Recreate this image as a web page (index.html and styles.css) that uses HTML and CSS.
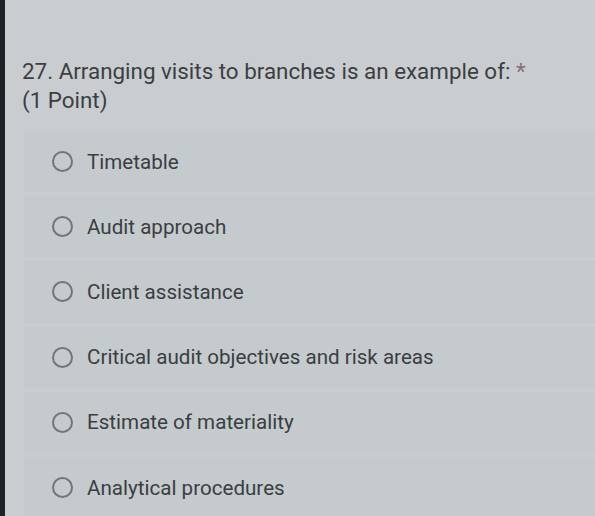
FILE: index.html
```html
<!DOCTYPE html>
<html lang="en">
<head>
<meta charset="utf-8">
<link rel="stylesheet" href="styles.css">
</head>
<body>
<div class="screen">
  <div class="question">
    <div class="title">27. Arranging visits to branches is an example of: <span class="req">*</span></div>
    <div class="points">(1 Point)</div>
  </div>
  <div class="options">
    <label class="option"><span class="radio"></span><span class="label">Timetable</span></label>
    <label class="option"><span class="radio"></span><span class="label">Audit approach</span></label>
    <label class="option"><span class="radio"></span><span class="label">Client assistance</span></label>
    <label class="option"><span class="radio"></span><span class="label">Critical audit objectives and risk areas</span></label>
    <label class="option"><span class="radio"></span><span class="label">Estimate of materiality</span></label>
    <label class="option"><span class="radio"></span><span class="label">Analytical procedures</span></label>
  </div>
</div>
</body>
</html>
```

FILE: styles.css
```css
html, body {
  margin: 0;
  padding: 0;
  height: 100%;
}
body {
  background: #c9cdd0;
  font-family: Roboto, "Liberation Sans", sans-serif;
  color: #3a3e42;
  overflow: hidden;
}
.screen {
  height: 516px;
  border-left: 5px solid #1c2228;
  display: flex;
  flex-direction: column;
}
.question {
  padding: 57px 0 0 17px;
  font-size: 22.4px;
  line-height: 29px;
  color: #3b3f43;
}
.req {
  color: #8a6e76;
}
.options {
  margin-top: 16px;
  margin-left: 19px;
  display: flex;
  flex-direction: column;
  gap: 4px;
}
.option {
  height: 61.2px;
  background: #c5cacd;
  display: flex;
  align-items: center;
  padding-left: 28px;
}
.radio {
  width: 17px;
  height: 17px;
  border: 2px solid #72767a;
  border-radius: 50%;
  flex: none;
}
.label {
  margin-left: 14px;
  font-size: 20.6px;
  color: #3a3e42;
}
```
